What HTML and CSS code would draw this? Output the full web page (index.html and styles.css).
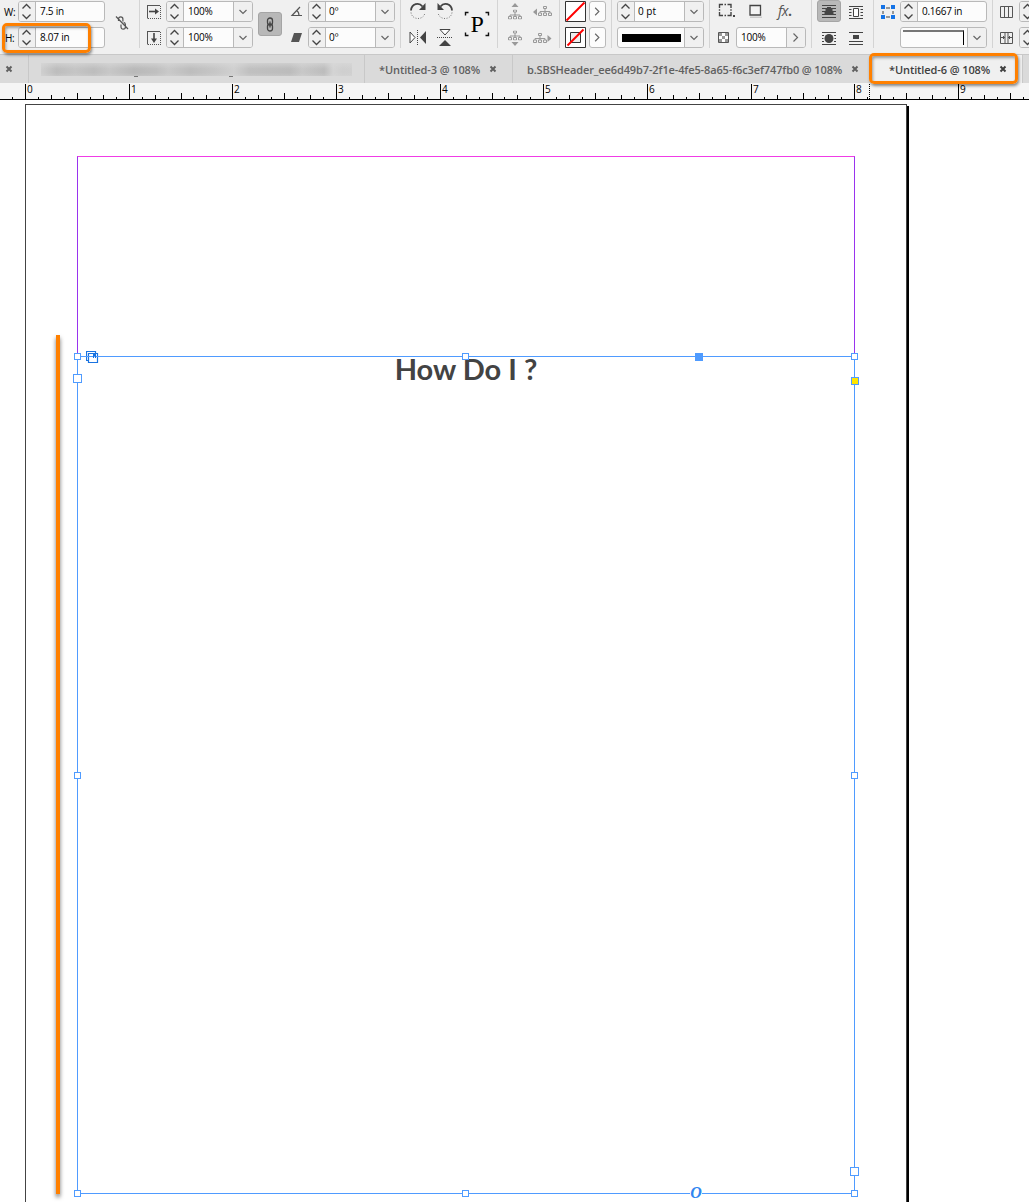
FILE: index.html
```html
<!DOCTYPE html>
<html lang="en">
<head>
    <meta charset="UTF-8">
    <meta name="viewport" content="width=device-width, initial-scale=1.0">
    <title>Untitled-6 @ 108%</title>
    <link rel="stylesheet" href="styles.css">
</head>
<body>

    <!-- Shared icons -->
    <svg class="defs" width="0" height="0">
        <symbol id="updown" viewBox="0 0 16 19">
            <path d="M3.500 6.500l4-4 4 4M3.500 12.500l4 4 4-4" fill="none" stroke="#444" stroke-width="1.300"/>
        </symbol>
        <symbol id="down" viewBox="0 0 18 19">
            <path d="M5.500 8l3.500 3.500L12.500 8" fill="none" stroke="#666" stroke-width="1.200"/>
        </symbol>
        <symbol id="right" viewBox="0 0 16 19">
            <path d="M5.500 5.500l4 4-4 4" fill="none" stroke="#666" stroke-width="1.200"/>
        </symbol>
        <symbol id="tree" viewBox="0 0 14 10">
            <path d="M5.500.5h3v2h-3zM7 2.500v3M2 7V5.500h10V7M7 5v2M.5 7h3v2.500h-3zM5.500 7h3v2.500h-3zM10.500 7h3v2.500h-3z" fill="none" stroke="#999"/>
        </symbol>
        <symbol id="close" viewBox="0 0 8 8">
            <path d="M1.500 1.500l5 5M6.500 1.500l-5 5" stroke="currentColor" stroke-width="2"/>
        </symbol>
    </svg>

    <!-- Control Bar -->
    <div class="toolbar">
        <div class="group size">
            <div class="rows labels"><span>W:</span><span>H:</span></div>
            <div class="rows">
                <div class="field"><svg class="spin"><use href="#updown"/></svg><span class="value">7.5 in</span></div>
                <div class="field"><svg class="spin"><use href="#updown"/></svg><span class="value">8.07 in</span></div>
            </div>
            <svg class="unlink" width="14" height="16" viewBox="0 0 14 16" fill="none" stroke="#555" stroke-width="1.200">
                <path d="M3.500 6V4a2.200 2.200 0 0 1 4.400 0v2.500M6 9.500V12a2.200 2.200 0 0 0 4.400 0V9.500a2.200 2.200 0 0 0-1.700-2.100M1 1.500l12 12.500"/>
            </svg>
        </div>

        <div class="group scale">
            <div class="rows icons">
                <svg width="14" height="21" viewBox="0 0 14 21"><path d="M.5 4v13.500M0 4.500h13" stroke="#555" fill="none"/><path d="M13.500 5v13M1 17.500h13" stroke="#555" stroke-dasharray="1 1"/><path d="M2 10.500h7" stroke="#444" stroke-width="1.600"/><path d="M8 7.500l4 3-4 3z" fill="#444"/></svg>
                <svg width="14" height="21" viewBox="0 0 14 21"><path d="M.5 4v13.500M0 4.500h13" stroke="#555" fill="none"/><path d="M13.500 5v13M1 17.500h13" stroke="#555" stroke-dasharray="1 1"/><path d="M7 6v7" stroke="#444" stroke-width="1.600"/><path d="M4 11.500h6L7 16z" fill="#444"/></svg>
            </div>
            <div class="rows">
                <div class="field"><svg class="spin"><use href="#updown"/></svg><span class="value">100%</span><svg class="drop"><use href="#down"/></svg></div>
                <div class="field"><svg class="spin"><use href="#updown"/></svg><span class="value">100%</span><svg class="drop"><use href="#down"/></svg></div>
            </div>
            <div class="chain">
                <svg width="8" height="15" viewBox="0 0 8 15" fill="none" stroke="#444" stroke-width="1.300"><rect x="1.500" y="1" width="5" height="7" rx="2.500"/><rect x="1.500" y="7" width="5" height="7" rx="2.500"/><path d="M4 4.500v6"/></svg>
            </div>
            <div class="rows icons">
                <svg width="13" height="21" viewBox="0 0 13 21" fill="none" stroke="#555" stroke-width="1.200"><path d="M10 6L2 14.500h10M6.500 9.500c2 1 2.500 3 2.500 5"/></svg>
                <svg width="13" height="21" viewBox="0 0 13 21"><path d="M4 6h8l-3 9H1z" fill="#555"/></svg>
            </div>
            <div class="rows">
                <div class="field"><svg class="spin"><use href="#updown"/></svg><span class="value angle">0º</span><svg class="drop"><use href="#down"/></svg></div>
                <div class="field"><svg class="spin"><use href="#updown"/></svg><span class="value angle">0º</span><svg class="drop"><use href="#down"/></svg></div>
            </div>
        </div>

        <div class="group rotate">
            <div class="rows icons">
                <svg width="18" height="21" viewBox="0 0 18 21"><path d="M2 9.500C2.500 2.500 10 1 13.500 5.500" fill="none" stroke="#444" stroke-width="1.800"/><path d="M16.500 2v7H10z" fill="#444"/><path d="M2 11.500c1 8 13 8 14 0" fill="none" stroke="#777" stroke-dasharray="1 1.500"/></svg>
                <svg width="18" height="21" viewBox="0 0 18 21"><path d="M1 5v11l5-5.500z" fill="#fff" stroke="#444"/><path d="M8.500 3v15" stroke="#444" stroke-dasharray="1 1"/><path d="M17 4v13l-6-6.500z" fill="#444"/></svg>
            </div>
            <div class="rows icons">
                <svg width="18" height="21" viewBox="0 0 18 21"><path d="M16 9.500C15.500 2.500 8 1 4.500 5.500" fill="none" stroke="#444" stroke-width="1.800"/><path d="M1.500 2v7H8z" fill="#444"/><path d="M16 11.500c-1 8-13 8-14 0" fill="none" stroke="#777" stroke-dasharray="1 1.500"/></svg>
                <svg width="18" height="21" viewBox="0 0 18 21"><path d="M4 2.500h10L9 8z" fill="#fff" stroke="#444"/><path d="M1 10.500h16" stroke="#444" stroke-dasharray="1 1"/><path d="M3 19h12l-6-6z" fill="#444"/></svg>
            </div>
            <div class="proxy">
                <svg width="26" height="26" viewBox="0 0 26 26" fill="none" stroke="#111" stroke-width="1.400"><path d="M1.500 4.500v-3h3M21.500 1.500h3v3M24.500 21.500v3h-3M4.500 24.500h-3v-3"/></svg>
                <span>P</span>
            </div>
        </div>

        <div class="group select">
            <div class="rows icons">
                <svg width="16" height="21" viewBox="0 0 16 21"><path d="M8 2l3.500 4h-7z" fill="#999"/><use href="#tree" x="1" y="8.500" width="14" height="10"/></svg>
                <svg width="16" height="21" viewBox="0 0 16 21"><use href="#tree" x="1" y="3.500" width="14" height="10"/><path d="M8 19l3.500-4h-7z" fill="#999"/></svg>
            </div>
            <div class="rows icons">
                <svg width="19" height="21" viewBox="0 0 19 21"><path d="M0 11l4-3.500v7z" fill="#999"/><use href="#tree" x="5" y="5" width="14" height="10"/></svg>
                <svg width="19" height="21" viewBox="0 0 19 21"><use href="#tree" x="0" y="6" width="14" height="10"/><path d="M18.500 11.500l-4-3.500v7z" fill="#999"/></svg>
            </div>
        </div>

        <div class="group paint">
            <div class="rows">
                <svg width="21" height="21" viewBox="0 0 21 21"><path d="M.5.5h20v20H.5z" fill="#fff" stroke="#333"/><path d="M1.500 19.500l18-18" stroke="#f00" stroke-width="2"/></svg>
                <svg width="21" height="21" viewBox="0 0 21 21"><path d="M.5.5h20v20H.5z" fill="#fff" stroke="#333"/><path d="M5.500 5.500h10v10h-10z" fill="#eee" stroke="#333"/><path d="M2.500 18.500l16-16" stroke="#f00" stroke-width="2"/></svg>
            </div>
            <div class="rows">
                <div class="more"><svg><use href="#right"/></svg></div>
                <div class="more"><svg><use href="#right"/></svg></div>
            </div>
        </div>

        <div class="group stroke">
            <div class="rows">
                <div class="field"><svg class="spin"><use href="#updown"/></svg><span class="value angle">0 pt</span><svg class="drop"><use href="#down"/></svg></div>
                <div class="field"><span class="value line"><i></i></span><svg class="drop"><use href="#down"/></svg></div>
            </div>
        </div>

        <div class="group effects">
            <div class="rows">
                <div class="line-icons">
                    <svg width="18" height="21" viewBox="0 0 18 21"><path d="M1.500 7V3.500H5M9.500 3.500H13V7M13 11v3.500H9.500M5 14.500H1.500V11M1.500 8.200v1.600M13 8.200v1.600M6.500 3.500H8M6.500 14.500H8" fill="none" stroke="#444" stroke-width="1.400"/><path d="M15 14h2v2h-2z" fill="#444"/></svg>
                    <svg width="15" height="21" viewBox="0 0 15 21"><path d="M2 15.500h12V17H2z" fill="#ccc"/><path d="M2 4.500h10.500V14H2z" fill="#f3f3f3" stroke="#444" stroke-width="1.300"/></svg>
                    <span class="fx">fx<b>.</b></span>
                </div>
                <div class="line-icons opacity">
                    <svg width="11" height="21" viewBox="0 0 11 21"><path d="M.5 5.500h10v10H.5z" fill="#fff" stroke="#555"/><path d="M1 6h3v3H1zM7 6h3v3H7zM4 9h3v3H4zM1 12h3v3H1zM7 12h3v3H7z" fill="#999"/></svg>
                    <div class="field"><span class="value">100%</span><svg class="drop"><use href="#right"/></svg></div>
                </div>
            </div>
        </div>

        <div class="group wrap">
            <div class="rows">
                <div class="wrap-btn active"><svg width="14" height="14" viewBox="0 0 14 14"><path d="M0 1.500h14M0 4.500h14M0 7.500h14M0 10.500h14M0 13.500h14" stroke="#444"/><path d="M5 3h4v2h1.500v2h1v3h-9V7h1V5H5z" fill="#444"/></svg></div>
                <div class="wrap-btn"><svg width="14" height="14" viewBox="0 0 14 14"><path d="M0 1.500h14M0 4.500h2M0 7.500h1.500M0 10.500h2M12 4.500h2M12.500 7.500H14M12 10.500h2M0 13.500h14" stroke="#444"/><circle cx="7" cy="7.500" r="4.500" fill="#444"/></svg></div>
            </div>
            <div class="rows">
                <div class="wrap-btn"><svg width="14" height="14" viewBox="0 0 14 14"><path d="M0 1.500h14M0 4.500h2.500M0 7.500h2.500M0 10.500h2.500M11.500 4.500H14M11.500 7.500H14M11.500 10.500H14M0 13.500h14M4.500 3.500h5v8h-5z" stroke="#444" fill="#fff"/></svg></div>
                <div class="wrap-btn"><svg width="14" height="14" viewBox="0 0 14 14"><path d="M0 1.500h14M0 10.500h14M0 13.500h14" stroke="#444"/><path d="M4 4h6v4H4z" fill="#444"/></svg></div>
            </div>
        </div>

        <div class="group corner">
            <div class="rows icons">
                <svg width="14" height="21" viewBox="0 0 14 21"><path d="M5 6h4v2H5zM5 15h4v2H5zM1 10h2v3H1zM11 10h2v3h-2z" fill="#999"/><path d="M0 4h4v4H0zM10 4h4v4h-4zM0 14h4v4H0zM10 14h4v4h-4z" fill="#1473e6"/></svg>
            </div>
            <div class="rows">
                <div class="field"><svg class="spin"><use href="#updown"/></svg><span class="value">0.1667 in</span></div>
                <div class="field"><span class="value shape"><i></i></span><svg class="drop"><use href="#down"/></svg></div>
            </div>
        </div>

        <div class="group columns">
            <div class="rows icons">
                <svg width="13" height="21" viewBox="0 0 13 21" fill="none" stroke="#555"><path d="M.5 5.500h12v11H.5zM4.500 5.500v11M8.500 5.500v11"/></svg>
                <svg width="13" height="21" viewBox="0 0 13 21" fill="none" stroke="#555"><path d="M.5 5.500h12v11H.5zM5 5.500v11M8 5.500v11M1 10.500h4M8 10.500h4M3.500 9v3M9.500 9v3"/></svg>
            </div>
            <div class="rows">
                <div class="field"><svg class="spin"><use href="#updown"/></svg></div>
                <div class="field"><svg class="spin"><use href="#updown"/></svg></div>
            </div>
        </div>
        <div class="callout callout-height"></div>
    </div>

    <!-- Document Tabs -->
    <div class="tabs">
        <div class="tab tab-first"><svg><use href="#close"/></svg></div>
        <div class="tab tab-hidden"><div class="smudge"><i></i><i></i></div></div>
        <div class="tab tab-three"><span>*Untitled-3 @ 108%</span><svg><use href="#close"/></svg></div>
        <div class="tab tab-header"><span>b.SBSHeader_ee6d49b7-2f1e-4fe5-8a65-f6c3ef747fb0 @ 108%</span><svg><use href="#close"/></svg></div>
        <div class="tab tab-active"><span>*Untitled-6 @ 108%</span><svg><use href="#close"/></svg></div>
        <div class="callout callout-tab"></div>
    </div>

    <!-- Ruler -->
    <svg class="ruler" id="ruler" width="1029" height="17"></svg>

    <!-- Document -->
    <div class="canvas">
        <div class="page">
            <div class="margins">
                <div class="frame">
                    <h1>How Do I ?</h1>
                    <i class="handle top left"></i>
                    <i class="handle top center"></i>
                    <i class="handle top right"></i>
                    <i class="handle middle left"></i>
                    <i class="handle middle right"></i>
                    <i class="handle bottom left"></i>
                    <i class="handle bottom center"></i>
                    <i class="handle bottom right"></i>
                    <i class="port in"></i>
                    <i class="port out"></i>
                    <i class="anchor"></i>
                    <i class="live-corner"></i>
                    <svg class="link-badge" width="13" height="13" viewBox="0 0 13 13"><path d="M.5.5h9v9h-9z" fill="none" stroke="#1a73e0" stroke-width="1.200"/><path d="M2.500 2.500h9v9h-9z" fill="#fff" stroke="#1a73e0" stroke-width="1.200"/><path d="M0 5.500h13" stroke="#4f9bff"/><path d="M7 3h3v4H9V5H8v2H7z" fill="#1a73e0"/></svg>
                    <span class="loop">O</span>
                </div>
            </div>
        </div>
        <div class="measure"></div>
    </div>

    <script>
        // One inch on the ruler at 108% zoom
        const inch = 103.67;
        const heights = [15, 2, 4, 2, 6, 2, 4, 2];
        let path = "";
        let labels = "";

        for (let i = -1; i < 78; i++) {
            const x = Math.round(25 + i * inch / 8);
            const h = heights[(i + 8) % 8];
            path += `M${x + 0.5} ${16 - h}V16`;
            if (i >= 0 && i % 8 === 0) {
                labels += `<text x="${x + 2}" y="10">${i / 8}</text>`;
            }
        }

        document.getElementById("ruler").innerHTML =
            `<path d="${path}M0 16.500H1029" stroke="#000"/>` +
            `<path d="M869.500 1V16" stroke="#000" stroke-dasharray="1 1"/>` + labels;
    </script>

</body>
</html>
```
FILE: styles.css
```css
* {
    margin: 0;
    padding: 0;
    box-sizing: border-box;
}

body {
    width: 1029px;
    height: 1202px;
    overflow: hidden;
    background: #fff;
    font-family: "Open Sans", "Noto Sans", sans-serif;
}

svg {
    display: block;
    flex: none;
}

.defs {
    position: absolute;
}

/* Control Bar */
.toolbar {
    position: relative;
    display: flex;
    height: 54px;
    background: #f0f0f0;
    font-size: 10px;
    letter-spacing: -0.25px;
    color: #000;
}

.group {
    position: relative;
    display: flex;
    flex: none;
    height: 48px;
    padding-top: 1px;
}

.group + .group {
    border-left: 1px solid #d4d4d4;
}

.rows {
    display: flex;
    flex-direction: column;
    flex: none;
    gap: 5px;
}

.size { width: 139px; padding-left: 4px; }
.scale { width: 261px; padding-left: 7px; }
.rotate { width: 97px; padding-left: 8px; gap: 9px; }
.select { width: 62px; padding-left: 9px; gap: 10px; }
.paint { width: 52px; padding-left: 5px; gap: 3px; }
.stroke { width: 98px; padding-left: 5px; }
.effects { width: 102px; padding-left: 8px; }
.wrap { width: 62px; padding-left: 5px; gap: 3px; }
.corner { width: 119px; padding-left: 7px; gap: 5px; }
.columns { width: 37px; padding-left: 7px; gap: 6px; overflow: hidden; }

.labels {
    width: 14px;
}

.labels span {
    height: 21px;
    line-height: 23px;
}

.labels span + span {
    padding-left: 1px;
}

.field {
    display: flex;
    width: 87px;
    height: 21px;
    border: 1px solid #b9b9b9;
    border-radius: 3px;
    background: #fcfcfc;
    overflow: hidden;
}

.spin {
    width: 17px;
    height: 19px;
    background: #f0f0f0;
    border-right: 1px solid #b9b9b9;
}

.drop {
    width: 19px;
    height: 19px;
    background: #f0f0f0;
    border-left: 1px solid #b9b9b9;
}

.value {
    flex: 1;
    padding-left: 4px;
    line-height: 19px;
    white-space: nowrap;
}

.angle {
    padding-left: 3px;
    letter-spacing: 0;
}

.unlink {
    margin: 14px 0 0 10px;
}

.scale .field {
    margin-left: 5px;
}

.chain {
    display: flex;
    align-items: center;
    justify-content: center;
    width: 24px;
    height: 24px;
    margin: 11px 8px 0 5px;
    border: 1px solid #a5a5a5;
    border-radius: 3px;
    background: #b8b8b8;
}

.proxy {
    display: flex;
    align-items: center;
    justify-content: center;
    width: 26px;
    height: 26px;
    margin: 10px 0 0 1px;
    font: 24px/26px "Liberation Serif", serif;
    color: #000;
}

.proxy svg {
    margin-right: -26px;
}

.proxy span {
    width: 26px;
    text-align: center;
}

.more {
    width: 17px;
    height: 21px;
    border: 1px solid #b9b9b9;
    border-radius: 3px;
    background: #fcfcfc;
}

.more svg {
    width: 15px;
    height: 19px;
}

.line {
    padding: 6px 3px 0 4px;
}

.line i {
    display: block;
    height: 8px;
    background: #000;
}

.line-icons {
    display: flex;
    height: 21px;
}

.line-icons svg + svg {
    margin-left: 12px;
}

.fx {
    margin-left: 15px;
    font: italic 14px/20px "Open Sans", sans-serif;
    letter-spacing: -0.5px;
    color: #555;
}

.fx b {
    font-style: normal;
}

.opacity .field {
    width: 70px;
    margin-left: 7px;
}

.wrap-btn {
    display: flex;
    align-items: center;
    justify-content: center;
    width: 24px;
    height: 21px;
}

.wrap-btn.active {
    height: 22px;
    margin: -1px 0 0;
    border: 1px solid #a5a5a5;
    border-radius: 3px;
    background: #b8b8b8;
}

.shape {
    padding: 2px 3px 0 2px;
}

.shape i {
    display: block;
    height: 15px;
    border-top: 2px solid #777;
    border-right: 1px solid #000;
}

/* Document Tabs */
.tabs {
    position: relative;
    display: flex;
    height: 29px;
    border-top: 1px solid #c8c8c8;
    background: #dadada;
    font-size: 11px;
    font-weight: 600;
    letter-spacing: -0.1px;
    color: #606060;
}

.tab {
    display: flex;
    align-items: center;
    flex: none;
    height: 28px;
    border-right: 1px solid #c8c8c8;
    white-space: nowrap;
}

.tab svg {
    width: 8px;
    height: 8px;
}

.tab-first { width: 29px; padding-left: 5px; }
.tab-hidden { width: 336px; padding-left: 12px; }
.tab-three { width: 148px; padding-left: 14px; }
.tab-header { width: 359px; padding-left: 14px; }
.tab-active { width: 151px; padding-left: 17px; background: #f0f0f0; color: #404040; }

.tab-three span,
.tab-active span { width: 110px; }
.tab-header span { width: 324px; letter-spacing: -0.12px; }

.smudge {
    position: relative;
    width: 311px;
    height: 13px;
    background:
        linear-gradient(180deg, rgba(218, 218, 218, 0.6), rgba(218, 218, 218, 0) 45%, rgba(218, 218, 218, 0) 75%, rgba(218, 218, 218, 0.3)),
        linear-gradient(90deg, #cfcfcf, #bdbdbd 5%, #c5c5c5 11%, #bdbdbd 17%, #c7c7c7 22%, #b9b9b9 30%, #bfbfbf 37%, #c9c9c9 41%, #bdbdbd 48%, #c6c6c6 56%, #d0d0d0 62%, #c0c0c0 67%, #bcbcbc 80%, #c8c8c8 84%, #bdbdbd 91%, #d4d4d4 94%, #cfcfcf 97%, #d0d0d0);
}

.smudge i {
    position: absolute;
    left: 93px;
    bottom: -1px;
    width: 4px;
    height: 1px;
    background: #777;
}

.smudge i + i {
    left: 188px;
}

/* Orange Callouts */
.callout {
    position: absolute;
    z-index: 2;
    border: 3px solid #ff8000;
    border-radius: 5px;
    box-shadow: 1px 2px 3px rgba(0, 0, 0, 0.45), inset 1px 2px 3px rgba(0, 0, 0, 0.35);
}

.callout-height {
    left: 2px;
    top: 23px;
    width: 89px;
    height: 30px;
}

.callout-tab {
    left: 869px;
    top: -2px;
    width: 149px;
    height: 31px;
}

/* Ruler */
.ruler {
    background: #f5f5f5;
    font-size: 10px;
}

/* Document */
.canvas {
    position: relative;
    height: 1102px;
    padding: 4px 0 0 25px;
    overflow: hidden;
}

.page {
    width: 882px;
    height: 1110px;
    padding: 51px;
    border: 1px solid #444;
    box-shadow: 2px 2px 0 #000;
}

.margins {
    width: 778px;
    height: 1038px;
    padding-top: 199px;
    border: 1px solid #9933ee;
    border-top-color: #f03ce6;
    border-bottom: 0;
}

.frame {
    position: relative;
    height: 838px;
    margin: 0 -1px;
    border: 1px solid #4f9bff;
}

.frame h1 {
    font: bold 29px/24px Lato, sans-serif;
    color: #434343;
    text-align: center;
}

.handle,
.port,
.anchor,
.live-corner {
    position: absolute;
    width: 7px;
    height: 7px;
    border: 1px solid #4f9bff;
    background: #fff;
}

.top { top: -4px; }
.middle { top: 415px; }
.bottom { bottom: -4px; }
.left { left: -4px; }
.center { left: 384px; }
.right { right: -4px; }

.port {
    width: 9px;
    height: 9px;
}

.in { left: -5px; top: 17px; }
.out { right: -5px; bottom: 17px; }

.anchor {
    left: 617px;
    top: -4px;
    width: 8px;
    height: 8px;
    background: #4f9bff;
}

.live-corner {
    right: -5px;
    top: 20px;
    width: 8px;
    height: 8px;
    background: #ffe600;
}

.link-badge {
    position: absolute;
    left: 8px;
    top: -6px;
}

.loop {
    position: absolute;
    left: 612px;
    bottom: -8px;
    width: 12px;
    background: #fff;
    font: italic bold 16px/16px "Liberation Serif", serif;
    text-align: center;
    color: #2f86f0;
}

.measure {
    position: absolute;
    left: 56px;
    top: 235px;
    width: 4px;
    height: 859px;
    background: #ff8000;
    box-shadow: 0 3px 4px rgba(0, 0, 0, 0.55);
}
```
